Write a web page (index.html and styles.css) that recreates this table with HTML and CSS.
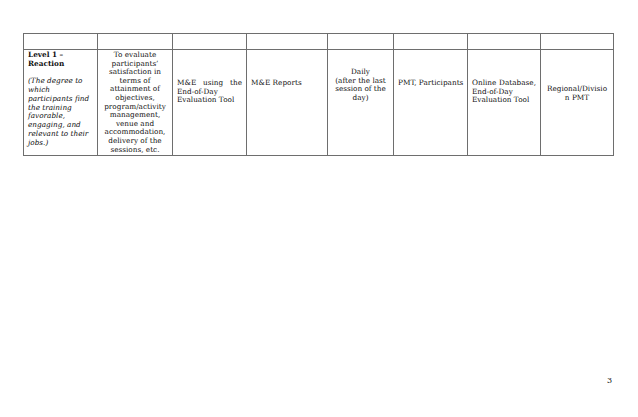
FILE: index.html
```html
<!DOCTYPE html>
<html>
<head>
<meta charset="utf-8">
<link rel="stylesheet" href="styles.css">
</head>
<body>
<div class="page">
  <table class="matrix">
    <colgroup>
      <col class="c1"><col class="c2"><col class="c3"><col class="c4"><col class="c5"><col class="c6"><col class="c7"><col class="c8">
    </colgroup>
    <tr class="head">
      <td></td><td></td><td></td><td></td><td></td><td></td><td></td><td></td>
    </tr>
    <tr class="body">
      <td class="left p1">
        <div class="bold">Level 1 –<br>Reaction</div>
        <div class="ital">(The degree to<br>which<br>participants find<br>the training<br>favorable,<br>engaging, and<br>relevant to their<br>jobs.)</div>
      </td>
      <td class="center p1">To evaluate<br>participants’<br>satisfaction in<br>terms of<br>attainment of<br>objectives,<br>program/activity<br>management,<br>venue and<br>accommodation,<br>delivery of the<br>sessions, etc.</td>
      <td class="left p2"><div class="spread"><span>M&amp;E</span><span>using</span><span>the</span></div>End-of-Day<br>Evaluation Tool</td>
      <td class="left p2">M&amp;E Reports</td>
      <td class="center p3">Daily<br>(after the last<br>session of the<br>day)</td>
      <td class="left p2">PMT, Participants</td>
      <td class="left p2"><div class="spread"><span>Online</span><span>Database,</span></div>End-of-Day<br>Evaluation Tool</td>
      <td class="center p4">Regional/Divisio<br>n PMT</td>
    </tr>
  </table>
  <div class="pagenum">3</div>
</div>
</body>
</html>
```

FILE: styles.css
```css
html, body {
  margin: 0;
  padding: 0;
  background: #ffffff;
}
.page {
  width: 638px;
  height: 417px;
  padding: 33px 0 0 23px;
  box-sizing: border-box;
  position: relative;
  font-family: "DejaVu Serif", "Liberation Serif", serif;
  color: #111111;
}
.matrix {
  border-collapse: collapse;
  table-layout: fixed;
  width: 591px;
}
.c1 { width: 74px; }
.c2 { width: 75px; }
.c3 { width: 74px; }
.c4 { width: 81px; }
.c5 { width: 66px; }
.c6 { width: 74px; }
.c7 { width: 73px; }
.c8 { width: 73px; }
.matrix td {
  border: 1px solid #6e6e6e;
  padding: 0 4px;
  vertical-align: top;
  font-size: 7.3px;
  line-height: 8.6px;
  white-space: nowrap;
}
.head td { height: 15px; }
.body td { height: 106px; box-sizing: border-box; }
.left { text-align: left; }
.center { text-align: center; }
.spread {
  display: flex;
  justify-content: space-between;
}
.bold { font-weight: bold; }
.ital { font-style: italic; margin-top: 8.6px; line-height: 8.9px; }
.matrix td.p1 { padding-top: 1px; }
.matrix td.p2 { padding-top: 29px; }
.matrix td.p3 { padding-top: 18px; }
.matrix td.p4 { padding-top: 35px; }
.pagenum {
  position: absolute;
  left: 607px;
  top: 376px;
  font-size: 8px;
  line-height: 10px;
}
```
